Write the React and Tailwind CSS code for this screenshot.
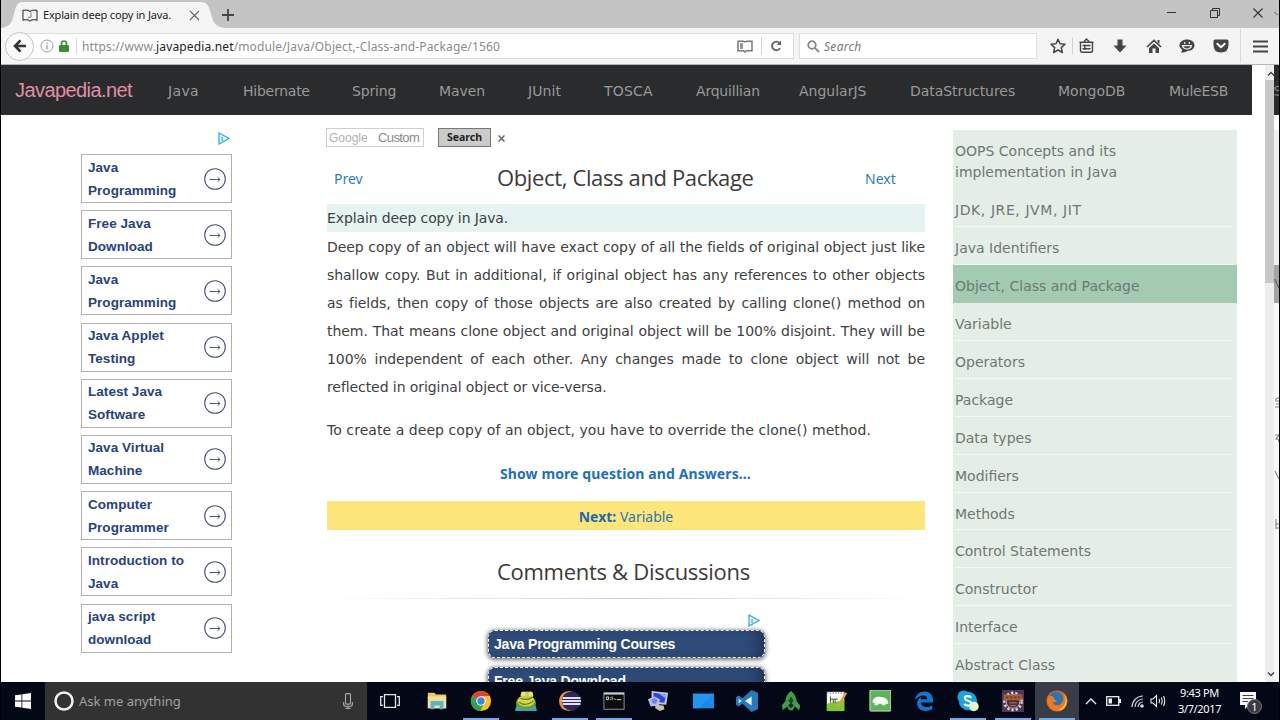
const navItems = [
  { label: 'Java', width: 'w-[75px]', tracking: 'tracking-[0.35px]' },
  { label: 'Hibernate', width: 'w-[109px]', tracking: 'tracking-[-0.25px]' },
  { label: 'Spring', width: 'w-[87px]', tracking: 'tracking-[-0.15px]' },
  { label: 'Maven', width: 'w-[89px]', tracking: 'tracking-[-0.1px]' },
  { label: 'JUnit', width: 'w-[76px]', tracking: 'tracking-[0.1px]' },
  { label: 'TOSCA', width: 'w-[92px]', tracking: 'tracking-[0.2px]' },
  { label: 'Arquillian', width: 'w-[103px]', tracking: 'tracking-[-0.2px]' },
  { label: 'AngularJS', width: 'w-[111px]', tracking: 'tracking-normal' },
  { label: 'DataStructures', width: 'w-[148px]', tracking: 'tracking-[-0.05px]' },
  { label: 'MongoDB', width: 'w-[111px]', tracking: 'tracking-normal' },
  { label: 'MuleESB', width: 'w-[80px]', tracking: 'tracking-[-0.25px]' },
];

const adLinks = [
  ['Java', 'Programming'],
  ['Free Java', 'Download'],
  ['Java', 'Programming'],
  ['Java Applet', 'Testing'],
  ['Latest Java', 'Software'],
  ['Java Virtual', 'Machine'],
  ['Computer', 'Programmer'],
  ['Introduction to', 'Java'],
  ['java script', 'download'],
];

const answerLines = [
  'Deep copy of an object will have exact copy of all the fields of original object just like',
  'shallow copy. But in additional, if original object has any references to other objects',
  'as fields, then copy of those objects are also created by calling clone() method on',
  'them. That means clone object and original object will be 100% disjoint. They will be',
  '100% independent of each other. Any changes made to clone object will not be',
];

const topics = [
  'JDK, JRE, JVM, JIT',
  'Java Identifiers',
  'Object, Class and Package',
  'Variable',
  'Operators',
  'Package',
  'Data types',
  'Modifiers',
  'Methods',
  'Control Statements',
  'Constructor',
  'Interface',
  'Abstract Class',
];

const TabStrip = () => (
  <div className="relative flex h-7 shrink-0 items-center bg-[#c4c4c4] text-[#3c3c3c]">
    <svg className="absolute left-0 top-0" width="226" height="28" viewBox="0 0 226 28">
      <path d="M0 28C9 27 11 22 13 14C15 6 16 2 22 2H200C206 2 208 6 210 14C212 22 214 27 224 28Z" fill="#f5f5f5" />
    </svg>
    <div className="relative flex h-7 w-[218px] items-center pl-[21px] pt-[2px]">
      <svg width="16" height="13" viewBox="0 0 16 13" fill="none" stroke="#555" strokeWidth="1.3">
        <path d="M8 12C6 10.5 3.5 10.5 1 11V1.5C3.5 1 6 1 8 2.5C10 1 12.5 1 15 1.5V11C12.5 10.5 10 10.5 8 12Z" />
        <path d="M9 3.5V7.5C9 9 6.5 9 6.300 7.600" stroke="#999" />
      </svg>
      <span className="ml-[5px] w-[146px] whitespace-nowrap font-['Noto_Sans',sans-serif] text-[11px] tracking-[-0.17px] text-[#222]">
        Explain deep copy in Java.
      </span>
      <svg width="11" height="11" viewBox="0 0 11 11" stroke="#666" strokeWidth="1.1">
        <path d="M1 1L10 10M10 1L1 10" />
      </svg>
    </div>
    <svg className="relative ml-[3px] mt-[2px]" width="12" height="12" viewBox="0 0 12 12" stroke="#444" strokeWidth="1.8">
      <path d="M6 0V12M0 6H12" />
    </svg>
    <div className="ml-auto flex items-center pb-[2px]">
      <svg width="10" height="10" viewBox="0 0 10 10" stroke="#333" strokeWidth="1"><path d="M0 4.5H9" /></svg>
      <svg className="ml-[33px]" width="10" height="10" viewBox="0 0 10 10" fill="none" stroke="#333" strokeWidth="1">
        <path d="M0.5 2.5H7.5V9.5H0.5ZM2.5 2.5V0.5H9.5V7.5H7.5" />
      </svg>
      <svg className="ml-[33px]" width="10" height="10" viewBox="0 0 10 10" stroke="#333" strokeWidth="1.1"><path d="M0.5 0.5L9.5 9.5M9.5 0.5L0.5 9.5" /></svg>
      <svg className="ml-[11px]" width="5" height="6" viewBox="0 0 5 6" fill="none" stroke="#666"><path d="M0 2L4 5" /></svg>
    </div>
  </div>
);

const ToolbarIcons = () => (
  <div className="flex h-full items-center text-[#454545]">
    <svg width="16" height="16" viewBox="0 0 16 16" fill="none" stroke="currentColor" strokeWidth="1.5" strokeLinejoin="round">
      <path d="M8 1.3L10 5.8L15 6.3L11.3 9.6L12.4 14.5L8 12L3.6 14.5L4.7 9.6L1 6.3L6 5.8Z" />
    </svg>
    <span className="ml-[6px] h-4 w-px bg-[#d0d0d0]" />
    <svg className="ml-[6px]" width="15" height="16" viewBox="0 0 15 16" fill="none" stroke="currentColor" strokeWidth="1.4">
      <path d="M1.5 4.2H13.5V12.5Q13.500 14.300 11.700 14.300H3.300Q1.500 14.300 1.500 12.500ZM0.500 4.200H14.500M3.500 7.500H11.500M3.500 10.700H11.500M5.800 7V12M5 3.500L7.500 1L10 3.500" />
    </svg>
    <svg className="ml-[19px]" width="14" height="14" viewBox="0 0 14 14" fill="currentColor">
      <path d="M4.5 0.5H9.5V6.5H13.5L7 13.5L0.5 6.5H4.5Z" />
    </svg>
    <svg className="ml-[19px]" width="16" height="14" viewBox="0 0 16 14" fill="currentColor">
      <path d="M8 4.5L13 9V14H9.5V9.5H6.5V14H3V9Z" />
      <path d="M1 8L8 1.5L15 8" fill="none" stroke="currentColor" strokeWidth="1.7" />
      <path d="M11.5 1H13.5V5L11.5 3Z" />
    </svg>
    <svg className="ml-[17px]" width="16" height="14" viewBox="0 0 16 14">
      <path d="M8 0.5C12.5 0.5 15.5 3 15.5 6.3C15.5 9.8 12.5 12 8.5 12C6 13.5 3.5 13.8 2 13.5C3 12.5 3 11.5 2.8 10.5C1.3 9.5 0.5 8 0.5 6.3C0.5 3 3.5 0.5 8 0.5Z" fill="currentColor" />
      <path d="M5.7 3V5M10.3 3V5M3.5 6.7H12.5C12 9 10.3 10 8 10C5.7 10 4 9 3.5 6.7Z" fill="none" stroke="#f4f4f4" strokeWidth="1.2" />
    </svg>
    <svg className="ml-[18px]" width="16" height="14" viewBox="0 0 16 14">
      <path d="M2 0.5H14Q15.5 0.5 15.5 2V6Q15.5 13.5 8 13.5Q0.5 13.5 0.5 6V2Q0.5 0.5 2 0.5Z" fill="currentColor" />
      <path d="M4.3 4.7L8 8.3L11.7 4.7" fill="none" stroke="#f4f4f4" strokeWidth="2" strokeLinecap="round" strokeLinejoin="round" />
    </svg>
    <span className="ml-[11px] h-[34px] w-px bg-[#dcdcdc]" />
    <svg className="ml-[12px] mr-[11px]" width="15" height="13" viewBox="0 0 15 13" stroke="currentColor" strokeWidth="2.2">
      <path d="M0 1.5H15M0 6.5H15M0 11.5H15" />
    </svg>
  </div>
);

const AddressBar = () => (
  <div className="flex h-[37px] shrink-0 items-center border-b border-[#b5b5b5] bg-[#f4f4f4] font-['Noto_Sans',sans-serif]">
    <div className="relative z-10 ml-1 flex size-[29px] shrink-0 items-center justify-center rounded-full border border-[#c4c4c4] bg-[#fbfbfb]">
      <svg width="14" height="14" viewBox="0 0 14 14" fill="none" stroke="#333" strokeWidth="2.6">
        <path d="M13 7H2.5M7.5 1.3L2 7L7.5 12.7" />
      </svg>
    </div>
    <div className="-ml-3 flex h-[26px] w-[772px] shrink-0 items-center border border-[#dedede] bg-white pl-[17px]">
      <svg width="14" height="14" viewBox="0 0 14 14" fill="none" stroke="#999" strokeWidth="1">
        <circle cx="7" cy="7" r="6" /><path d="M7 6V10.5M7 3.5V5" strokeWidth="1.3" />
      </svg>
      <svg className="ml-[5px]" width="10" height="12" viewBox="0 0 10 12">
        <path d="M2.5 6V3.5A2.5 2.5 0 0 1 7.5 3.5V6" fill="none" stroke="#3d8f2d" strokeWidth="1.6" />
        <rect y="5" width="10" height="7" rx="1" fill="#3d8f2d" />
      </svg>
      <span className="ml-[7px] h-4 w-px bg-[#d5d5d5]" />
      <span className="ml-[5px] whitespace-nowrap pt-[2px] text-[12px] tracking-[0.14px] text-[#8a8a8a]">
        https://www.<span className="text-[#222]">javapedia.net</span>/module/Java/Object,-Class-and-Package/1560
      </span>
      <svg className="ml-auto" width="16" height="13" viewBox="0 0 16 13" fill="none" stroke="#777" strokeWidth="1.5">
        <path d="M8 12L6.5 10.7H1V1.3H6Q8 1.3 8 2.5Q8 1.3 10 1.3H15V10.7H9.5ZM3 4H6M3 6H6M3 8H6" />
      </svg>
      <span className="ml-[8px] h-[18px] w-px bg-[#d5d5d5]" />
      <svg className="ml-[8px] mr-[11px]" width="12" height="12" viewBox="0 0 12 12" fill="none" stroke="#666" strokeWidth="1.9">
        <path d="M9.5 3A4.3 4.3 0 1 0 10 8.2" /><path d="M11 0.5V5H6.5Z" fill="#666" stroke="none" />
      </svg>
    </div>
    <div className="ml-[5px] flex h-[26px] w-[238px] shrink-0 items-center border border-[#e0e0e0] bg-white pl-[7px]">
      <svg width="13" height="13" viewBox="0 0 13 13" fill="none" stroke="#888" strokeWidth="1.8">
        <circle cx="5" cy="5" r="3.8" /><path d="M7.8 7.8L12 12" />
      </svg>
      <span className="ml-[4px] pt-[2px] text-[12px] italic tracking-[0.3px] text-[#777]">Search</span>
    </div>
    <div className="ml-auto h-full"><ToolbarIcons /></div>
  </div>
);

const SiteNav = () => (
  <nav className="flex h-[50px] w-[1251px] shrink-0 items-center bg-[#2a2b2c] pl-[14px] text-[#999]">
    <span className="w-[153px] whitespace-nowrap font-['Liberation_Sans',sans-serif] text-[20px] tracking-[-0.58px] text-[#e08fa4]">
      Javapedia.net
    </span>
    {navItems.map((item) => (
      <a key={item.label} className={`${item.width} ${item.tracking} shrink-0 whitespace-nowrap pt-[2px] text-[14px]`}>
        {item.label}
      </a>
    ))}
  </nav>
);

const AdChoices = () => (
  <svg width="12" height="13" viewBox="0 0 12 13" fill="none" stroke="#35b0cc" strokeWidth="1.3">
    <path d="M1 1L11 6.5L1 12Z" fill="#e8f8fb" /><path d="M4 5V9" />
  </svg>
);

const AdColumn = () => (
  <aside className="ml-[80px] flex w-[151px] shrink-0 flex-col pt-[17px] font-['Liberation_Sans',sans-serif]">
    <div className="mb-[9px] flex justify-end pr-[2px]"><AdChoices /></div>
    {adLinks.map(([first, second], index) => (
      <div key={index} className="mb-[7.2px] flex h-[49px] shrink-0 items-center border border-[#b0b0b0] pl-[6px] pr-[5px]">
        <p className="flex-1 text-[13.5px] font-bold leading-[23px] tracking-[0.05px] text-[#27427c]">
          {first}<br />{second}
        </p>
        <svg width="22" height="22" viewBox="0 0 22 22" fill="none" stroke="#4b5680">
          <circle cx="11" cy="11" r="10.3" strokeWidth="1.1" />
          <path d="M5.5 11.5H16M13.5 9.3L16 11.5L13.5 13.7" strokeWidth="1" />
        </svg>
      </div>
    ))}
  </aside>
);

const CourseAd = ({ children }) => (
  <div className="mb-[9px] rounded-[7px] bg-[#2e4a76] shadow-[0_1px_4px_1px_rgba(0,0,0,0.55)]">
    <div className="flex h-[28px] items-center rounded-[7px] border border-dashed border-white pl-[5px] font-['Liberation_Sans',sans-serif] text-[14px] font-bold tracking-[-0.2px] text-white shadow-[inset_-14px_0_12px_-8px_rgba(20,34,66,0.5)]">
      {children}
    </div>
  </div>
);

const Article = () => (
  <main className="ml-[95px] flex w-[598px] shrink-0 flex-col pt-[13px] text-[14px] leading-[28.1px] text-[#404040]">
    <div className="-ml-px flex h-[19px] shrink-0 items-center">
      <div className="flex h-[19px] w-[98px] items-center border border-[#cfcfcf] pl-[2px] font-['Liberation_Sans',sans-serif] leading-none">
        <span className="w-[49px] text-[12px] text-[#b0b0b0]">Google</span>
        <span className="text-[13px] tracking-[-0.6px] text-[#888]">Custom</span>
      </div>
      <button className="ml-[14px] h-[19px] w-[53px] border border-[#777] bg-[#cbcbcb] font-['Noto_Sans',sans-serif] text-[10.5px] font-bold leading-none text-[#222]">
        Search
      </button>
      <svg className="ml-[7px] mt-px" width="7" height="7" viewBox="0 0 7 7" stroke="#666" strokeWidth="1.5"><path d="M0.5 0.5L6.5 6.5M6.5 0.5L0.5 6.5" /></svg>
    </div>
    <div className="flex h-[57px] shrink-0 items-center pl-[7px] pt-[4px] font-['Noto_Sans',sans-serif] text-[#2f7abf]">
      <a className="w-[163px] pt-[3px]">Prev</a>
      <h1 className="w-[368px] font-['Open_Sans',sans-serif] text-[22px] tracking-[-0.36px] text-[#3a3a3a]">Object, Class and Package</h1>
      <a className="pt-[3px]">Next</a>
    </div>
    <p className="bg-[#e5f4f0] tracking-[-0.12px]">Explain deep copy in Java.</p>
    <div className="pt-[0.5px]">
      {answerLines.map((line) => (
        <p key={line} className="whitespace-nowrap tracking-[-0.05px] [text-align-last:justify]">{line}</p>
      ))}
      <p className="tracking-[-0.08px]">reflected in original object or vice-versa.</p>
    </div>
    <p className="mt-[14.5px] whitespace-nowrap tracking-[0.06px]">
      To create a deep copy of an object, you have to override the clone() method.
    </p>
    <p className="mt-[16px] whitespace-nowrap pl-[173px] font-['Noto_Sans',sans-serif] font-bold tracking-[0.1px] text-[#1f6fbd]">
      Show more question and Answers...
    </p>
    <p className="mt-[13px] bg-[#fde77c] pt-[2px] text-center font-['Noto_Sans',sans-serif] leading-[27px] text-[#2f75ae]">
      <b className="text-[#2269b0]">Next:</b> Variable
    </p>
    <h2 className="mt-[27px] pl-[170px] font-['Open_Sans',sans-serif] text-[22px] tracking-[-0.29px] text-[#3a3a3a]">
      Comments &amp; Discussions
    </h2>
    <div className="mt-[13px] h-px shrink-0 bg-linear-to-r from-transparent via-[#cfcfcf] to-transparent" />
    <div className="ml-[161px] mt-[15px] w-[277px]">
      <div className="mb-[3px] flex justify-end pr-[5px]"><AdChoices /></div>
      <CourseAd>Java Programming Courses</CourseAd>
      <CourseAd>Free Java Download</CourseAd>
    </div>
  </main>
);

const TopicList = () => (
  <aside className="ml-[28px] mt-[15px] flex w-[284px] shrink-0 flex-col self-start bg-[#e4eee7] text-[14px] text-[#6f7773]">
    <a className="h-[59.3px] shrink-0 pl-[2px] pt-[10.5px] leading-[21.5px]">OOPS Concepts and its<br />implementation in Java</a>
    {topics.map((topic, index) => {
      const selected = topic === 'Object, Class and Package';
      return (
        <a
          key={topic}
          className={`flex h-[37.92px] shrink-0 items-center pl-[2px] pr-[4px] ${selected ? 'bg-[#a3cbb1]' : ''}`}
        >
          <span
            className={`h-full w-full border-b pt-px leading-[40.5px] ${selected ? 'border-transparent' : 'border-[#f1f7f3]'} ${
              index === 0 ? 'tracking-[0.58px]' : ''
            }`}
          >
            {topic}
          </span>
        </a>
      );
    })}
  </aside>
);

const ScrollArea = () => (
  <div className="flex h-full">
    <div className="relative flex w-[9px] flex-col items-center bg-[#eeeeee]">
      <div className="h-[15px]" />
      <div className="h-[203px] w-full bg-[#c8c8c8]" />
      <svg className="absolute left-[2px] top-[6px]" width="8" height="6" viewBox="0 0 8 6" fill="none" stroke="#444" strokeWidth="1.5"><path d="M1 4.5L4 1.5L7 4.5" /></svg>
      <svg className="absolute bottom-[5px] left-[2px] z-10" width="8" height="6" viewBox="0 0 8 6" fill="none" stroke="#444" strokeWidth="1.5"><path d="M1 1.5L4 4.5L7 1.5" /></svg>
    </div>
    <div className="w-[5px] bg-[#f8f8f8] text-[#777]">
      <div className="flex h-[50px] items-center bg-[#2a2b2c]">
        <svg width="5" height="11" viewBox="0 0 5 11" fill="none" stroke="#888" strokeWidth="1.2"><path d="M5 1.5Q1 1 1 3.5Q1 5 5 5.7M0.5 9.5Q3 10.500 5 9.800" /></svg>
      </div>
      <div className="h-[15px] bg-white" />
      <div className="h-[135px] bg-[#eef2ef]" />
      <div className="flex h-[38px] items-center bg-[#a4a4a4]">
        <svg width="5" height="10" viewBox="0 0 5 10" stroke="#666" strokeWidth="1.3"><path d="M0.5 0L5 9" /></svg>
      </div>
      <svg width="5" height="230" viewBox="0 0 5 230" fill="none" stroke="#888" strokeWidth="1.1">
        <path d="M5 95Q1 95 2 98H5M1 104H5M2 101H5M1 132H5L2 136Q5 136 5 139M1 168L5 176M2 216V226M1 221H5M2 225H5" />
      </svg>
    </div>
  </div>
);

const appIcons = [
  {
    name: 'explorer',
    art: (
      <>
        <path d="M2 3H9L11 5H22V20H2Z" fill="#e9c66c" /><path d="M2 7H22V20H2Z" fill="#f8df95" />
        <path d="M5 12H19V21H15V17H9V21H5Z" fill="#55b4d8" />
      </>
    ),
  },
  {
    name: 'chrome',
    running: true,
    art: (
      <>
        <circle cx="12" cy="12" r="11" fill="#fbc116" />
        <path d="M12 12L2.5 6.5A11 11 0 0 1 21.5 6.5Z" fill="#e04336" />
        <path d="M12 12L2.5 6.5A11 11 0 0 0 11 23L15.5 15Z" fill="#30a352" />
        <path d="M12 6.5H21.5L22 9L16 11Z" fill="#fbc116" />
        <circle cx="12" cy="12" r="5.2" fill="#fff" /><circle cx="12" cy="12" r="4" fill="#3f80e8" />
      </>
    ),
  },
  {
    name: 'frog',
    art: (
      <>
        <path d="M2 15H22L24 23H0Z" fill="#42a4a7" /><ellipse cx="12" cy="14" rx="11" ry="6.5" fill="#699d2d" />
        <ellipse cx="12" cy="12" rx="9.500" ry="6" fill="#d6d547" /><ellipse cx="13" cy="6" rx="7" ry="4.5" fill="#c9cf4e" />
        <circle cx="9" cy="4" r="2.5" fill="#ece875" /><circle cx="17" cy="4" r="2.5" fill="#ece875" />
        <path d="M4 13Q12 19 20 12M6 9Q12 12 19 8" stroke="#668121" strokeWidth="1.4" fill="none" />
      </>
    ),
  },
  {
    name: 'eclipse',
    running: true,
    art: (
      <>
        <circle cx="11" cy="12" r="11" fill="#ec923e" /><circle cx="13.5" cy="12" r="10.5" fill="#302759" />
        <path d="M4 8.7H23.5M3 12H24M4 15.3H23.5" stroke="#e2e0ed" strokeWidth="2.1" />
      </>
    ),
  },
  {
    name: 'terminal',
    running: true,
    art: (
      <>
        <rect x="1" y="3" width="22" height="18" fill="#0c0c0c" stroke="#999" /><path d="M1 4H23" stroke="#ccc" strokeWidth="2" />
        <path d="M4 7.5V10.5H6V7.5ZM8 8V9M8 10V11M10 7V11M12 9L14 11M15 10.5H20" stroke="#ddd" fill="none" />
      </>
    ),
  },
  {
    name: 'putty',
    art: (
      <>
        <path d="M5 1L23 3L21 16L5 15Z" fill="#c8cad6" /><path d="M7 3L21 5L19 14L7 13Z" fill="#2f45d6" />
        <path d="M13 4L21 5L20 9Z" fill="#93a9f3" />
        <path d="M9 16L18 17L19 21L14 23L9 20Z" fill="#c9c4a9" /><path d="M1 10L8 7L14 10L13 17L4 18Z" fill="#b3bdef" />
        <circle cx="8" cy="12" r="3" fill="#6f83df" />
      </>
    ),
  },
  { name: 'desktop', art: <><rect x="1" y="4" width="23" height="16" fill="#1a8ce8" /><path d="M1 4H24L7 20H1Z" fill="#2495ef" /></> },
  {
    name: 'vscode',
    art: (
      <>
        <path d="M17 0L24 3V21L17 24L7 15L3 18L0 16V8L3 6L7 9Z" fill="#2679ba" />
        <path d="M17 7V17L10 12ZM3 9.500L6 12L3 14.500Z" fill="#f2f8ff" />
      </>
    ),
  },
  {
    name: 'rocket',
    art: (
      <>
        <path d="M12 1C17 5 18 9 18 12L22 17L21 22L16 18L14 22H10L8 18L3 22L2 17L6 12C6 9 7 5 12 1Z" fill="#409b4a" />
        <path d="M12 7L15 12L12 15L9 12Z" fill="#184c2b" /><path d="M9 17L12 14L15 17L12 20Z" fill="#0d2b20" />
      </>
    ),
  },
  {
    name: 'notepad',
    art: (
      <>
        <path d="M2 2H21V23H2Z" fill="#f6f7ee" /><path d="M2 15L21 11V23H2Z" fill="#7cc733" />
        <path d="M2 3H21" stroke="#a9a9a9" strokeWidth="2" strokeDasharray="1.5 1.5" />
        <path d="M6 7V14M9 10V14M11 10V14M6 10H14" stroke="#444" fill="none" /><path d="M23 3L14 18" stroke="#d9a13a" strokeWidth="2.5" />
      </>
    ),
  },
  {
    name: 'evernote',
    art: (
      <>
        <rect x="1" y="0" width="23" height="23" rx="1" fill="#5fb45a" stroke="#d5ecd2" />
        <path d="M4 14C3.500 9 8 7 13 7.500C18 7.500 21 10 21 15H18V16.500H14V15H10V16.500H6V14Z" fill="#f5fff3" />
      </>
    ),
  },
  {
    name: 'edge',
    art: (
      <path d="M2 11C3 5 7 1.5 12.5 1.5C19 1.5 22.5 6 22 13.5H8.5C9 17 11.5 18.5 14.5 18.5C17 18.5 19 18 21 16.5V21C15 24 7 23.5 5 17.5C3.5 12.5 6 9 9 7.5C8.5 8.5 8.5 9.5 8.5 10.2H15.5C15.5 7.5 14 6 11.5 6C8 6 5 8 2 11Z" fill="#1275cd" />
    ),
  },
  {
    name: 'skype',
    running: true,
    art: (
      <>
        <circle cx="7.5" cy="7.5" r="7" fill="#18a4df" /><circle cx="12" cy="12" r="10" fill="#18a4df" /><circle cx="16" cy="16" r="6.5" fill="#18a4df" />
        <path d="M15.500 8.500C14 6 8.500 6 8.500 9C8.500 12.500 15.500 11 15.500 14.500C15.500 18 9 17.500 8 15" stroke="#fff" strokeWidth="2.3" fill="none" />
        <circle cx="18.5" cy="18" r="5.200" fill="#e7f6c6" />
      </>
    ),
  },
  {
    name: 'gear',
    running: true,
    art: (
      <>
        <rect x="0" y="0" width="24" height="24" fill="#513756" />
        <circle cx="12" cy="12.500" r="9.500" fill="none" stroke="#e3dce1" strokeWidth="2.5" strokeDasharray="2.5 2.2" />
        <circle cx="12" cy="12.500" r="7.500" fill="#50303a" stroke="#ccc0bd" /><path d="M2 5H22V11H2Z" fill="#a9622f" />
        <path d="M4 8H20" stroke="#6b3b28" strokeDasharray="3 1.500" strokeWidth="2" /><path d="M8 14H16M9 17H15" stroke="#c07c5a" />
      </>
    ),
  },
  {
    name: 'firefox',
    running: true,
    active: true,
    art: (
      <>
        <circle cx="12" cy="12" r="11.500" fill="#e86a1a" /><circle cx="11" cy="9.5" r="7.8" fill="#2a74b8" />
        <path d="M17 2C21 6 20 13 16 16C12 18 8 16 7 13C10 14 11 13 12 11.5C9 11.5 8 9 8.5 7.5C6 6 4 6 2 8C0 14 4 23 12 23C21 23 25 12 20 5Z" fill="#ed7b20" />
        <path d="M20 4C23 11 21 19 13 22C21 23.500 26 12 20 4Z" fill="#f8c53f" />
      </>
    ),
  },
];

const Taskbar = () => (
  <footer className="flex h-[38px] shrink-0 items-stretch bg-[#030716] font-['Noto_Sans',sans-serif] text-white">
    <div className="flex w-[44px] shrink-0 items-center justify-center">
      <svg width="16" height="16" viewBox="0 0 16 16" fill="#fff"><path d="M0 2.3L6.5 1.4V7.6H0ZM7.3 1.3L16 0V7.6H7.3ZM0 8.4H6.5V14.6L0 13.7ZM7.3 8.4H16V16L7.3 14.8Z" /></svg>
    </div>
    <div className="flex w-[322px] shrink-0 items-center bg-[#323232] pl-[9px] text-[13px] text-[#a2a2a2]">
      <svg width="20" height="20" viewBox="0 0 20 20"><circle cx="10" cy="10" r="8.5" fill="none" stroke="#f2f2f2" strokeWidth="2.5" /></svg>
      <span className="ml-[5px] pt-[2px]">Ask me anything</span>
      <svg className="ml-auto mr-[14px]" width="10" height="16" viewBox="0 0 10 16" fill="none" stroke="#aaa" strokeWidth="1.1">
        <rect x="2.5" y="0.6" width="5" height="10.5" rx="1" /><path d="M0.6 9V11Q0.6 13.3 3 13.3H7Q9.4 13.3 9.4 11V9M5 13.5V15.5M2.5 15.4H7.5" />
      </svg>
    </div>
    <div className="flex w-[48px] shrink-0 items-center pl-[13px]">
      <svg width="20" height="14" viewBox="0 0 20 14" fill="none" stroke="#e5e5e5" strokeWidth="1.3"><path d="M4.5 0.7H15.5V13.3H4.5ZM3 2.7H0.7V11.3H3M17 2.7H19.3V11.3H17" /></svg>
    </div>
    {appIcons.map((icon) => (
      <div key={icon.name} className={`flex w-[44.27px] shrink-0 flex-col items-center justify-end ${icon.active ? 'bg-[#3a3d47]' : ''}`}>
        <svg className="mb-[6px]" width="22" height="22" viewBox="0 0 24 24">{icon.art}</svg>
        <div className={`h-[2px] w-[36px] ${icon.running ? 'bg-[#76a9e4]' : ''}`} />
      </div>
    ))}
    <div className="ml-[6px] flex flex-1 items-center">
      <svg width="12" height="7" viewBox="0 0 12 7" fill="none" stroke="#eee" strokeWidth="1.3"><path d="M1 6L6 1L11 6" /></svg>
      <svg className="ml-[9px]" width="15" height="10" viewBox="0 0 15 10"><rect x="0.7" y="0.7" width="12" height="8.6" fill="none" stroke="#eee" strokeWidth="1.3" /><path d="M2.5 2.5H6V7.5H2.5ZM13 3H15V7H13Z" fill="#eee" /></svg>
      <svg className="ml-[10px] mt-px" width="13" height="13" viewBox="0 0 13 13" fill="none" stroke="#ccc" strokeWidth="1.2">
        <path d="M1 12A11 11 0 0 1 12 1M4 12A8 8 0 0 1 12 4M7 12A5 5 0 0 1 12 7" /><circle cx="11" cy="11" r="1.2" fill="#fff" />
      </svg>
      <svg className="ml-[6px]" width="16" height="14" viewBox="0 0 16 14" fill="none" stroke="#eee" strokeWidth="1.1">
        <path d="M1 5H3L6.5 1.5V12.5L3 9H1ZM9 5Q10 7 9 9M11.3 3.5Q13 7 11.3 10.5M13.5 2Q16 7 13.5 12" />
      </svg>
      <div className="ml-[12px] w-[43px] whitespace-nowrap text-center text-[11px] leading-[16.500px] tracking-[-0.35px]">9:43 PM<br />3/7/2017</div>
      <svg className="ml-[18px] mt-[3px]" width="24" height="24" viewBox="0 0 24 24">
        <path d="M1 1H17V14H10L6 18V14H1Z" fill="#f5f5f5" /><path d="M3.5 4.5H14.5M3.5 7.5H14.5M3.5 10.5H9" stroke="#444" />
        <circle cx="15.5" cy="15.5" r="7" fill="#3a3a3e" stroke="#777" /><text x="15.5" y="19.5" fontSize="11" fill="#fff" textAnchor="middle">1</text>
      </svg>
    </div>
  </footer>
);

const App = () => (
  <div className="flex h-[720px] w-[1280px] flex-col overflow-hidden border-x border-black bg-white font-['DejaVu_Sans',sans-serif]">
    <TabStrip />
    <AddressBar />
    <div className="flex h-[617px] shrink-0 overflow-hidden">
      <div className="flex w-[1264px] shrink-0 flex-col">
        <SiteNav />
        <div className="flex h-[567px] overflow-hidden">
          <AdColumn />
          <Article />
          <TopicList />
        </div>
      </div>
      <ScrollArea />
    </div>
    <Taskbar />
  </div>
);

export default App;
